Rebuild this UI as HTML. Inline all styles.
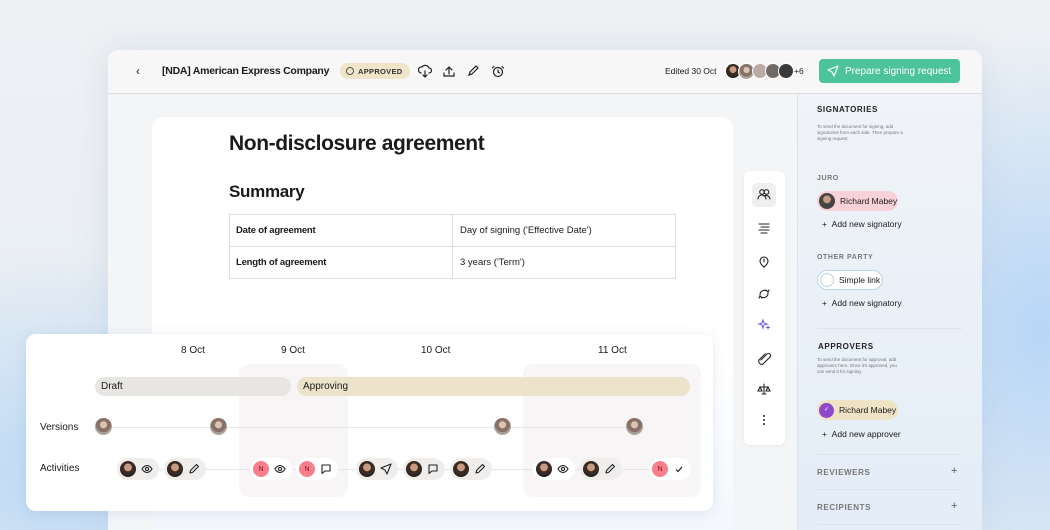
<!DOCTYPE html>
<html style="width:1050px;height:530px;overflow:hidden;background:#e8edf2"><head><meta charset="utf-8"><style>
*{box-sizing:border-box;margin:0;padding:0}
body{width:1050px;height:530px;overflow:hidden;position:relative;font-family:"Liberation Sans",sans-serif;color:#1a1a1a;
background:radial-gradient(ellipse 260px 220px at 60px 470px,#bcd9f5 0%,rgba(188,217,245,0) 100%),radial-gradient(ellipse 200px 300px at 1040px 330px,#b7d6f7 0%,rgba(183,214,247,0) 100%),linear-gradient(180deg,#eef1f4,#e6ecf2);}
.abs{position:absolute}
.win{left:108px;top:50px;width:874px;height:480px;background:#f4f5f7;border-radius:10px 10px 0 0;box-shadow:0 0 30px rgba(150,170,200,.25);overflow:hidden}
.hdr{left:0;top:0;width:874px;height:44px;background:#f7f7f8;border-bottom:1px solid #dcdde0}
.side{left:689px;top:44px;width:185px;height:446px;background:linear-gradient(180deg,#f0f3f7,#e3edf8);border-left:1px solid #dfe2e6}
.doc{left:152px;top:117px;width:581px;height:413px;background:linear-gradient(180deg,#fff 60%,#f3f7fc);border-radius:12px 12px 0 0}
.tb{left:744px;top:171px;width:41px;height:274px;background:#fff;border-radius:6px;box-shadow:0 1px 4px rgba(0,0,0,.06)}
.tl{left:26px;top:334px;width:687px;height:177px;background:#fff;border-radius:10px;box-shadow:0 2px 12px rgba(120,150,190,.2)}
.cap{font-size:8px;font-weight:bold;letter-spacing:.6px;color:#666}
.tiny{font-size:4.5px;color:#777;line-height:6px}
.pill{display:flex;align-items:center;border-radius:12px;height:20px;font-size:8.5px}
.av{width:16px;height:16px;border-radius:50%;background:radial-gradient(circle at 50% 40%,#c89b80 0 30%,#3a2a24 32% 60%,#222 62%)}
.ver{width:17px;height:17px;border-radius:50%;background:radial-gradient(circle at 50% 40%,#d9c4b6 0 25%,#8a7166 28% 55%,#aaa39d 58%)}
.act{position:absolute;top:458px;height:22px;border-radius:11px;background:#efeeec;display:flex;align-items:center;padding:0 6px 0 3px;gap:5px}
.act.w{background:#fff}
.n{width:16px;height:16px;border-radius:50%;background:#f77f8c;color:#7a1020;font-size:7px;display:flex;align-items:center;justify-content:center}
svg{display:block}
</style></head><body>
<svg width="0" height="0" style="position:absolute"><defs>
<symbol id="eye" viewBox="0 0 12 12"><path d="M1 6s2-3.5 5-3.5S11 6 11 6s-2 3.5-5 3.5S1 6 1 6z" fill="none" stroke="#222" stroke-width="1.1"/><circle cx="6" cy="6" r="1.6" fill="none" stroke="#222" stroke-width="1.1"/></symbol>
<symbol id="pen" viewBox="0 0 12 12"><path d="M2 10l.6-2.6L8.5 1.5l2 2-5.9 5.9z" fill="none" stroke="#222" stroke-width="1.1" stroke-linejoin="round"/></symbol>
<symbol id="msg" viewBox="0 0 12 12"><path d="M2 2h8v6H5l-3 2.5z" fill="none" stroke="#222" stroke-width="1.1" stroke-linejoin="round"/></symbol>
<symbol id="send" viewBox="0 0 12 12"><path d="M11 1L1 5l4 2 2 4z" fill="none" stroke="#222" stroke-width="1.1" stroke-linejoin="round"/></symbol>
<symbol id="chk" viewBox="0 0 12 12"><path d="M3 6.5l2 2 4-4.5" fill="none" stroke="#222" stroke-width="1.2"/></symbol>
</defs></svg>
<div class="abs win">
 <div class="abs hdr"></div>
 <div class="abs side"></div>
</div>
<div class="abs" style="left:136px;top:64px;font-size:12px">&#8249;</div>
<div class="abs" style="left:162px;top:65px;font-size:10.5px;font-weight:bold;letter-spacing:-.25px">[NDA] American Express Company</div>
<div class="abs" style="left:340px;top:63px;width:70px;height:16px;background:#f0e5c8;border-radius:8px;font-size:7.5px;font-weight:bold;letter-spacing:.3px;color:#333;display:flex;align-items:center;padding-left:6px;gap:4px"><span style="width:8px;height:8px;border:1px solid #555;border-radius:50%;display:inline-block"></span>APPROVED</div>
<svg class="abs" style="left:418px;top:64px" width="90" height="14" fill="none" stroke="#222" stroke-width="1.2" stroke-linecap="round">
<path d="M3 9a3 3 0 0 1 1-6 4 4 0 0 1 7 1 2.5 2.5 0 0 1 0 5M7 7v6M5 11l2 2 2-2"/>
<path d="M31 3v7M28 6l3-3 3 3M26 9v3h10V9"/>
<path d="M51 11l1-3 6-6 2 2-6 6z"/>
<circle cx="80" cy="8" r="4.5"/><path d="M80 6v2l1.5 1M76 2.5l-1.5 1.5M84 2.5l1.5 1.5"/>
</svg>
<div class="abs" style="left:665px;top:66px;font-size:8.5px">Edited 30 Oct</div>
<div class="abs" style="left:725px;top:63px;display:flex">
<div class="av" style="border:1px solid #fff"></div><div class="ver" style="margin-left:-3px;border:1px solid #fff"></div><div class="av" style="margin-left:-3px;border:1px solid #fff;background:#b9aca5"></div><div class="av" style="margin-left:-3px;border:1px solid #fff;background:#6f6a66"></div><div class="av" style="margin-left:-3px;border:1px solid #fff;background:#3a3a3a"></div>
</div>
<div class="abs" style="left:794px;top:66px;font-size:8.5px">+6</div>
<div class="abs" style="left:819px;top:59px;width:141px;height:24px;background:#4cc39a;border-radius:4px;color:#fff;font-size:10px;display:flex;align-items:center;padding-left:8px;gap:6px">
<svg width="12" height="12" fill="none" stroke="#fff" stroke-width="1.2" stroke-linejoin="round"><path d="M11 1L1 5l4 2 2 4z"/></svg>Prepare signing request</div>

<div class="abs doc">
 <div class="abs" style="left:77px;top:15px;font-size:21px;font-weight:bold;letter-spacing:-.4px">Non-disclosure agreement</div>
 <div class="abs" style="left:77px;top:65px;font-size:17px;font-weight:bold;letter-spacing:-.3px">Summary</div>
 <table class="abs" style="left:77px;top:97px;width:447px;border-collapse:collapse;font-size:9.5px">
  <tr style="height:32px"><td style="border:1px solid #ddd;padding-left:6px;width:223px;font-weight:bold;letter-spacing:-.2px">Date of agreement</td><td style="border:1px solid #ddd;padding-left:7px">Day of signing ('Effective Date')</td></tr>
  <tr style="height:32px"><td style="border:1px solid #ddd;padding-left:6px;font-weight:bold;letter-spacing:-.2px">Length of agreement</td><td style="border:1px solid #ddd;padding-left:7px">3 years ('Term')</td></tr>
 </table>
</div>

<div class="abs tb">
 <div class="abs" style="left:8px;top:12px;width:24px;height:24px;background:#efefef;border-radius:5px"></div>
 <svg class="abs" style="left:13px;top:17px" width="14" height="240" fill="none" stroke="#222" stroke-width="1.1" stroke-linecap="round">
 <circle cx="5" cy="4" r="2.3"/><circle cx="9.5" cy="4" r="2.3"/><path d="M1 11a4 4 0 0 1 8 0M7 8a4 4 0 0 1 6 3"/>
 <path d="M2 36h10M4 39h8M2 42h10M4 45h6"/>
 <path d="M7 79s-4-3-4-6a4 4 0 0 1 8 0c0 3-4 6-4 6zM7 71v3"/>
 <path d="M3 107a4.5 4.5 0 0 1 8-3M11 105a4.5 4.5 0 0 1-8 3M9 102l2 2 1-2M5 110l-2-2-1 2"/>
 <path stroke="#7a5de8" d="M6 132l1 3 3 1-3 1-1 3-1-3-3-1 3-1zM11 138v3M9.5 139.5h3"/>
 <path d="M4 172l6-6a2 2 0 0 1 3 3l-7 7a3 3 0 0 1-4-4l6-6"/>
 <path d="M7 196v10M3 199h8M3 199l-2 4h4zM11 199l-2 4h4zM5 206h4"/>
 </svg>
 <div class="abs" style="left:19px;top:244px;width:2px;height:2px;background:#222;border-radius:1px;box-shadow:0 4px 0 #222,0 8px 0 #222"></div>
</div>

<div class="abs cap" style="left:817px;top:105px;color:#222">SIGNATORIES</div>
<div class="abs tiny" style="left:817px;top:124px;width:90px">To send the document for signing, add signatories from each side. Then prepare a signing request</div>
<div class="abs cap" style="left:817px;top:175px;font-size:7px;color:#777">JURO</div>
<div class="abs pill" style="left:817px;top:191px;width:81px;background:#f9d2d8;padding-left:2px;gap:5px"><div class="av" style="background:radial-gradient(circle at 50% 40%,#c89b80 0 30%,#444 32%)"></div>Richard Mabey</div>
<div class="abs" style="left:822px;top:219px;font-size:8.5px">+&nbsp;&nbsp;Add new signatory</div>
<div class="abs cap" style="left:817px;top:254px;font-size:7px;color:#777">OTHER PARTY</div>
<div class="abs pill" style="left:817px;top:270px;width:66px;background:#fff;border:1px solid #b9d4ee;padding-left:2px;gap:5px"><div style="width:14px;height:14px;border-radius:50%;border:1px solid #b9d4ee"></div>Simple link</div>
<div class="abs" style="left:822px;top:298px;font-size:8.5px">+&nbsp;&nbsp;Add new signatory</div>
<div class="abs" style="left:817px;top:328px;width:145px;border-top:1px solid #dde4ec"></div>
<div class="abs cap" style="left:818px;top:342px;color:#222">APPROVERS</div>
<div class="abs tiny" style="left:817px;top:357px;width:85px">To send the document for approval, add approvers here. Once it's approved, you can send it for signing</div>
<div class="abs pill" style="left:817px;top:400px;width:81px;background:#efe3c6;padding-left:2px;gap:5px"><div style="width:15px;height:15px;border-radius:50%;background:#8e48c8;color:#fff;font-size:6px;text-align:center;line-height:15px">✓</div>Richard Mabey</div>
<div class="abs" style="left:822px;top:429px;font-size:8.5px">+&nbsp;&nbsp;Add new approver</div>
<div class="abs" style="left:817px;top:454px;width:145px;border-top:1px solid #dde4ec"></div>
<div class="abs cap" style="left:817px;top:468px;color:#777">REVIEWERS</div>
<div class="abs" style="left:951px;top:465px;font-size:11px;color:#555">+</div>
<div class="abs" style="left:817px;top:489px;width:145px;border-top:1px solid #dde4ec"></div>
<div class="abs cap" style="left:817px;top:503px;color:#777">RECIPIENTS</div>
<div class="abs" style="left:951px;top:500px;font-size:11px;color:#555">+</div>
<div class="abs" style="left:817px;top:524px;width:145px;border-top:1px solid #dde4ec"></div>

<div class="abs tl"></div>
<div class="abs" style="left:239px;top:364px;width:109px;height:133px;background:#f7f5f5;border-radius:10px"></div>
<div class="abs" style="left:523px;top:364px;width:178px;height:133px;background:#f7f5f5;border-radius:10px"></div>
<div class="abs" style="left:181px;top:345px;font-size:10px">8 Oct</div>
<div class="abs" style="left:281px;top:345px;font-size:10px">9 Oct</div>
<div class="abs" style="left:421px;top:345px;font-size:10px">10 Oct</div>
<div class="abs" style="left:598px;top:345px;font-size:10px">11 Oct</div>
<div class="abs" style="left:95px;top:377px;width:196px;height:19px;background:#e8e6e3;border-radius:10px;font-size:10px;padding:4px 0 0 6px">Draft</div>
<div class="abs" style="left:297px;top:377px;width:393px;height:19px;background:#ede3cb;border-radius:10px;font-size:10px;padding:4px 0 0 6px">Approving</div>
<div class="abs" style="left:40px;top:422px;font-size:10px">Versions</div>
<div class="abs" style="left:40px;top:463px;font-size:10px">Activities</div>
<div class="abs" style="left:104px;top:427px;width:530px;border-top:1px solid #e6e6e6"></div>
<div class="abs" style="left:125px;top:469px;width:555px;border-top:1px solid #e6e6e6"></div>
<div class="abs ver" style="left:95px;top:418px"></div>
<div class="abs ver" style="left:210px;top:418px"></div>
<div class="abs ver" style="left:494px;top:418px"></div>
<div class="abs ver" style="left:626px;top:418px"></div>
<div class="act" style="left:117px"><div class="av"></div><svg width="12" height="12"><use href="#eye"/></svg></div>
<div class="act" style="left:164px"><div class="av"></div><svg width="12" height="12"><use href="#pen"/></svg></div>
<div class="act w" style="left:250px"><div class="n">N</div><svg width="12" height="12"><use href="#eye"/></svg></div>
<div class="act w" style="left:296px"><div class="n">N</div><svg width="12" height="12"><use href="#msg"/></svg></div>
<div class="act" style="left:356px"><div class="av"></div><svg width="12" height="12"><use href="#send"/></svg></div>
<div class="act" style="left:403px"><div class="av"></div><svg width="12" height="12"><use href="#msg"/></svg></div>
<div class="act" style="left:450px"><div class="av"></div><svg width="12" height="12"><use href="#pen"/></svg></div>
<div class="act w" style="left:533px"><div class="av"></div><svg width="12" height="12"><use href="#eye"/></svg></div>
<div class="act" style="left:580px"><div class="av"></div><svg width="12" height="12"><use href="#pen"/></svg></div>
<div class="act w" style="left:649px"><div class="n">N</div><svg width="12" height="12"><use href="#chk"/></svg></div>
</body></html>
